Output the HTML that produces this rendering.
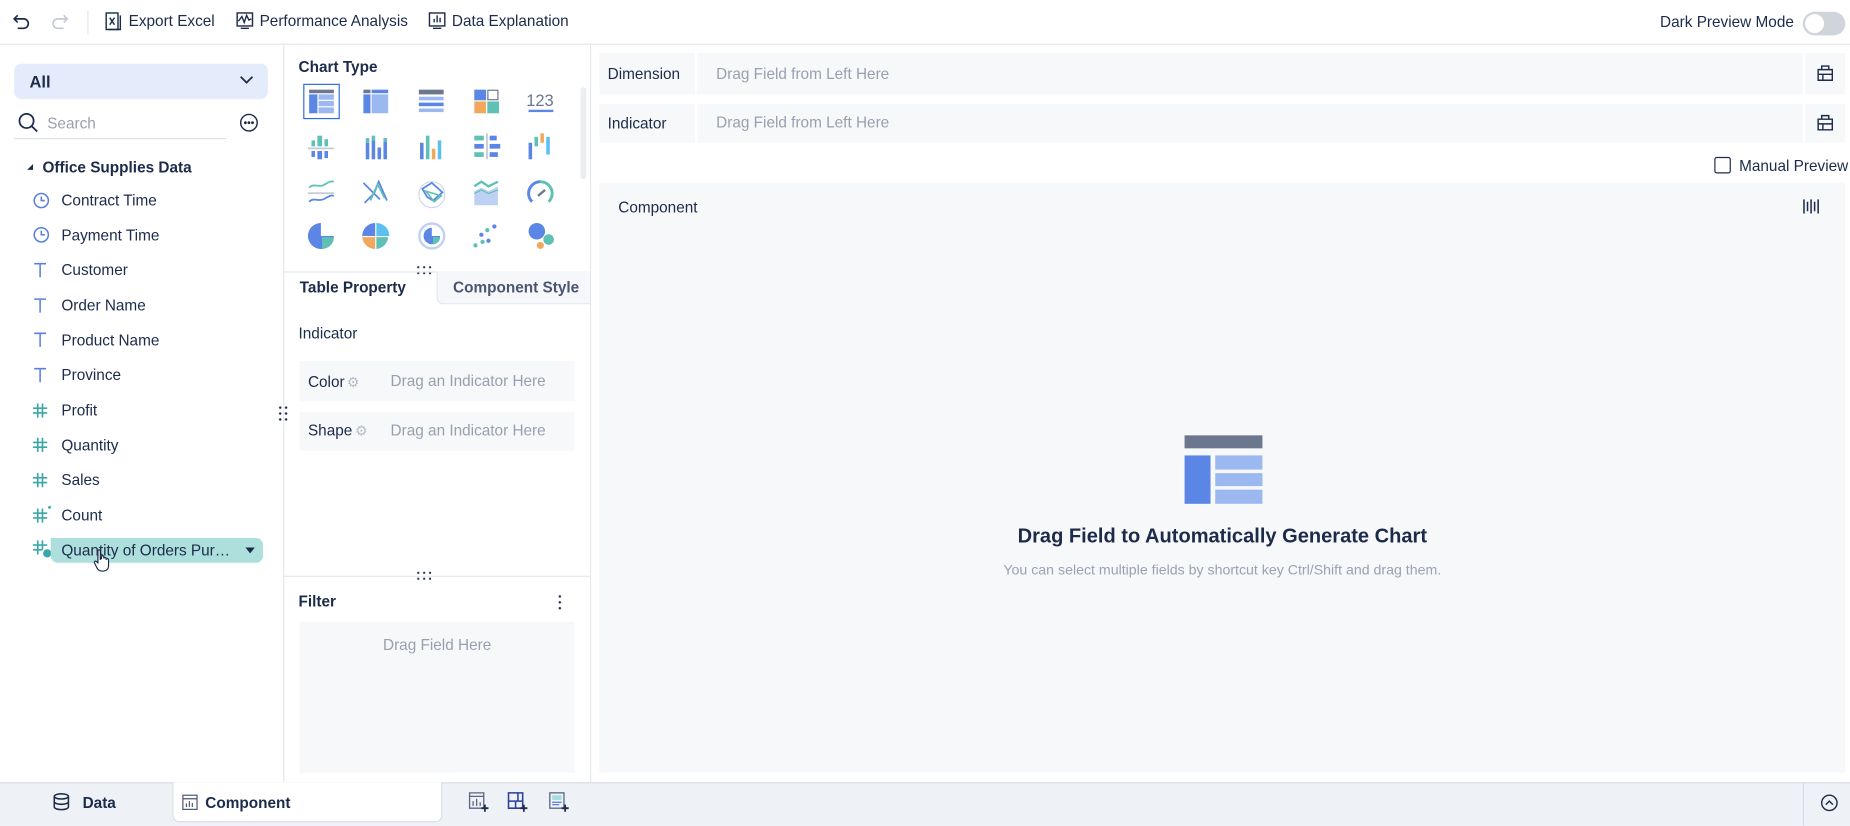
<!DOCTYPE html>
<html><head><meta charset="utf-8"><style>
*{box-sizing:border-box;margin:0;padding:0}
html,body{width:1850px;height:826px;overflow:hidden;background:#fff}
#s{position:absolute;left:0;top:0;width:1568px;height:700px;transform:scale(1.17985);transform-origin:0 0;font-family:"Liberation Sans",sans-serif;color:#1c2b4a;font-size:13px}
.a{position:absolute}
.t{position:absolute;white-space:nowrap;line-height:16px}
.b{font-weight:bold}
.g{color:#98a0b0}
.ic{position:absolute}
</style></head><body><div id="s">
<!-- top bar -->
<div class="a" style="left:0;top:37px;width:1568px;height:1px;background:#e4e7ec"></div>
<svg class="ic" style="left:10px;top:10px" width="16" height="16" viewBox="0 0 16 16" fill="none" stroke="#1c2b4a" stroke-width="1.4"><path d="M5 3L2 6l3 3"/><path d="M2 6h8a4 4 0 010 8H5"/></svg>
<svg class="ic" style="left:43px;top:10px" width="16" height="16" viewBox="0 0 16 16" fill="none" stroke="#c5cad3" stroke-width="1.4"><path d="M11 3l3 3-3 3"/><path d="M14 6H6a4 4 0 000 8h5"/></svg>
<div class="a" style="left:74px;top:9px;width:1px;height:20px;background:#e4e7ec"></div>
<svg class="ic" style="left:89px;top:10px" width="14" height="16" viewBox="0 0 14 16" fill="none" stroke="#1c2b4a" stroke-width="1.2"><rect x="1" y="1" width="10" height="14"/><path d="M13 3v12H3"/><path d="M4 5l4 6M8 5l-4 6"/></svg>
<div class="t" style="left:109px;top:10px">Export Excel</div>
<svg class="ic" style="left:200px;top:10px" width="15" height="15" viewBox="0 0 15 15" fill="none" stroke="#1c2b4a" stroke-width="1.2"><rect x="1" y="1" width="13" height="11"/><path d="M2 8l3-4 2 5 2-6 2 4 2-1"/><path d="M4 14h7"/></svg>
<div class="t" style="left:220px;top:10px">Performance Analysis</div>
<svg class="ic" style="left:363px;top:10px" width="15" height="15" viewBox="0 0 15 15" fill="none" stroke="#1c2b4a" stroke-width="1.2"><rect x="1" y="1" width="13" height="11"/><path d="M5 9V6M7.5 9V3M10 9V5"/><path d="M4 14h7"/></svg>
<div class="t" style="left:383px;top:10px">Data Explanation</div>
<div class="t" style="left:1407px;top:11px">Dark Preview Mode</div>
<div class="a" style="left:1528px;top:10px;width:36px;height:20px;border-radius:10px;background:#d0d4db"></div>
<div class="a" style="left:1530px;top:12px;width:16px;height:16px;border-radius:8px;background:#fff"></div>

<!-- left panel -->
<div class="a" style="left:240px;top:38px;width:1px;height:625px;background:#e4e7ec"></div>
<div class="a" style="left:12px;top:54px;width:215px;height:30px;border-radius:6px;background:#e4ecfb"></div>
<div class="t b" style="left:25px;top:61px;font-size:14px">All</div>
<svg class="ic" style="left:202px;top:63px" width="14" height="10" viewBox="0 0 14 10" fill="none" stroke="#1c2b4a" stroke-width="1.5"><path d="M2 2l5 5 5-5"/></svg>
<svg class="ic" style="left:15px;top:95px" width="18" height="18" viewBox="0 0 18 18" fill="none" stroke="#1c2b4a" stroke-width="1.5"><circle cx="7.5" cy="7.5" r="6"/><path d="M12 12l4.5 4.5"/></svg>
<div class="t g" style="left:40px;top:97px">Search</div>
<div class="a" style="left:12px;top:117px;width:180px;height:1px;background:#dde1e7"></div>
<svg class="ic" style="left:203px;top:96px" width="16" height="16" viewBox="0 0 16 16" fill="none" stroke="#1c2b4a" stroke-width="1.2"><circle cx="8" cy="8" r="7"/><circle cx="5" cy="8" r=".6" fill="#1c2b4a"/><circle cx="8" cy="8" r=".6" fill="#1c2b4a"/><circle cx="11" cy="8" r=".6" fill="#1c2b4a"/></svg>
<svg class="ic" style="left:22px;top:138px" width="7" height="7" viewBox="0 0 7 7"><path d="M6 1V6H1z" fill="#1c2b4a"/></svg>
<div class="t b" style="left:36px;top:134px">Office Supplies Data</div>

<svg class="ic" style="left:28px;top:163px" width="14" height="14" viewBox="0 0 14 14" fill="none" stroke="#5b7ee0" stroke-width="1.3"><circle cx="7" cy="7" r="6"/><path d="M7 3.5V7h3"/></svg>
<div class="t" style="left:52px;top:162px">Contract Time</div>
<svg class="ic" style="left:28px;top:192px" width="14" height="14" viewBox="0 0 14 14" fill="none" stroke="#5b7ee0" stroke-width="1.3"><circle cx="7" cy="7" r="6"/><path d="M7 3.5V7h3"/></svg>
<div class="t" style="left:52px;top:192px">Payment Time</div>
<svg class="ic" style="left:28px;top:222px" width="12" height="14" viewBox="0 0 12 14" fill="none" stroke="#5b7ee0" stroke-width="1.3"><path d="M1 1.5h10M6 1.5V13"/></svg>
<div class="t" style="left:52px;top:221px">Customer</div>
<svg class="ic" style="left:28px;top:252px" width="12" height="14" viewBox="0 0 12 14" fill="none" stroke="#5b7ee0" stroke-width="1.3"><path d="M1 1.5h10M6 1.5V13"/></svg>
<div class="t" style="left:52px;top:251px">Order Name</div>
<svg class="ic" style="left:28px;top:281px" width="12" height="14" viewBox="0 0 12 14" fill="none" stroke="#5b7ee0" stroke-width="1.3"><path d="M1 1.5h10M6 1.5V13"/></svg>
<div class="t" style="left:52px;top:281px">Product Name</div>
<svg class="ic" style="left:28px;top:311px" width="12" height="14" viewBox="0 0 12 14" fill="none" stroke="#5b7ee0" stroke-width="1.3"><path d="M1 1.5h10M6 1.5V13"/></svg>
<div class="t" style="left:52px;top:310px">Province</div>
<svg class="ic" style="left:27px;top:341px" width="14" height="14" viewBox="0 0 14 14" fill="none" stroke="#3aa8a8" stroke-width="1.4"><path d="M5 1v12M9 1v12M1 5h12M1 9h12"/></svg>
<div class="t" style="left:52px;top:340px">Profit</div>
<svg class="ic" style="left:27px;top:370px" width="14" height="14" viewBox="0 0 14 14" fill="none" stroke="#3aa8a8" stroke-width="1.4"><path d="M5 1v12M9 1v12M1 5h12M1 9h12"/></svg>
<div class="t" style="left:52px;top:370px">Quantity</div>
<svg class="ic" style="left:27px;top:400px" width="14" height="14" viewBox="0 0 14 14" fill="none" stroke="#3aa8a8" stroke-width="1.4"><path d="M5 1v12M9 1v12M1 5h12M1 9h12"/></svg>
<div class="t" style="left:52px;top:399px">Sales</div>
<svg class="ic" style="left:27px;top:428px" width="17" height="16" viewBox="0 0 17 16" fill="none" stroke="#3aa8a8" stroke-width="1.4"><path d="M5 3v12M9 3v12M1 7h12M1 11h12"/><circle cx="15" cy="2" r="1.2" fill="#3aa8a8" stroke="none"/></svg>
<div class="t" style="left:52px;top:429px">Count</div>
<svg class="ic" style="left:27px;top:457px" width="18" height="16" viewBox="0 0 18 16" fill="none" stroke="#3aa8a8" stroke-width="1.4"><path d="M5 1v12M9 1v8M1 5h12M1 9h8"/><circle cx="13" cy="12" r="3.5" fill="#3aa8a8" stroke="none"/></svg>
<div class="a" style="left:43px;top:456px;width:180px;height:21px;border-radius:0 6px 6px 6px;background:#ade0dc"></div>
<div class="t" style="left:52px;top:459px">Quantity of Orders Pur…</div>
<svg class="ic" style="left:208px;top:464px" width="8" height="6" viewBox="0 0 8 6"><path d="M0 0h8L4 5z" fill="#1c2b4a"/></svg>
<svg class="ic" style="left:78px;top:465px" width="16" height="20" viewBox="0 0 16 20" fill="#fff" stroke="#1c2b4a" stroke-width="1"><path d="M5 2a1 1 0 012 0v7l1-.5V7a1 1 0 012 0v1.5a1 1 0 012 0v1a1 1 0 012 0V15c0 2-2 4-4 4H8c-2 0-3-1-4-3L2 12a1 1 0 011.5-1.2L5 12z"/></svg>
<div class="a" style="left:235px;top:343px;width:10px;height:14px;background:radial-gradient(circle,#1c2b4a 0.9px,transparent 1.2px) 0 0/5px 5px"></div>

<!-- middle -->
<div class="a" style="left:500px;top:38px;width:1px;height:625px;background:#e4e7ec"></div>
<div class="t b" style="left:253px;top:49px">Chart Type</div>
<div class="a" style="left:492px;top:74px;width:5px;height:78px;border-radius:3px;background:#eceef2"></div>
<div class="a" style="left:257px;top:71px;width:31px;height:30px;border:1.5px solid #2c6bd9"></div>
<svg class="ic" style="left:256px;top:70px" width="240" height="150" viewBox="0 0 240 150">
<!-- row1 -->
<rect x="6" y="6" width="21" height="3" fill="#6b778c"/><rect x="6" y="10" width="7" height="16" fill="#5b86e5"/><rect x="14" y="10" width="13" height="4.5" fill="#9cb8f0"/><rect x="14" y="15.5" width="13" height="4.5" fill="#9cb8f0"/><rect x="14" y="21" width="13" height="5" fill="#9cb8f0"/>
<rect x="52" y="6" width="6" height="3" fill="#6b778c"/><rect x="59" y="6" width="14" height="3" fill="#5b86e5"/><rect x="52" y="10" width="6" height="16" fill="#5b86e5"/><rect x="59" y="10" width="14" height="16" fill="#9cb8f0"/>
<rect x="99" y="6" width="21" height="4" fill="#6b778c"/><rect x="99" y="12" width="21" height="3" fill="#9cb8f0"/><rect x="99" y="17" width="21" height="3" fill="#5b86e5"/><rect x="99" y="22" width="21" height="3" fill="#9cb8f0"/>
<rect x="146" y="6" width="10" height="9" fill="#5b86e5"/><rect x="157.5" y="6.5" width="8.5" height="8" fill="#fff" stroke="#6b778c"/><rect x="146" y="16" width="10" height="10" fill="#f0a95c"/><rect x="157" y="16" width="10" height="10" fill="#5fc1b5"/>
<text x="190" y="20" font-family="Liberation Sans" font-size="14" fill="#6b778c">123</text><rect x="192" y="23" width="21" height="2" fill="#5b86e5"/>
<!-- row2 -->
<g transform="translate(0,5)">
<rect x="8" y="44" width="3" height="5" fill="#5fc1b5"/><rect x="13" y="40" width="4" height="9" fill="#5fc1b5"/><rect x="19" y="43" width="3" height="6" fill="#5fc1b5"/><rect x="5" y="50" width="22" height="1.5" fill="#c5cad3"/><rect x="8" y="53" width="3" height="5" fill="#5b86e5"/><rect x="13" y="53" width="4" height="7" fill="#5b86e5"/><rect x="19" y="53" width="3" height="6" fill="#5b86e5"/>
<rect x="54" y="46" width="3" height="14" fill="#5b86e5"/><rect x="54" y="42" width="3" height="4" fill="#5fc1b5"/><rect x="59" y="44" width="3" height="16" fill="#5b86e5"/><rect x="59" y="40" width="3" height="4" fill="#5fc1b5"/><rect x="64" y="50" width="3" height="10" fill="#5b86e5"/><rect x="69" y="45" width="3" height="15" fill="#5b86e5"/><rect x="69" y="42" width="3" height="3" fill="#5fc1b5"/>
<rect x="100" y="46" width="3" height="14" fill="#5b86e5"/><rect x="105" y="40" width="3" height="20" fill="#5fc1b5"/><rect x="110" y="51" width="3" height="9" fill="#f0a95c"/><rect x="115" y="44" width="3" height="16" fill="#5bc0f0"/>
<rect x="146" y="40" width="8" height="4" fill="#5fc1b5"/><rect x="156" y="38" width="1.5" height="22" fill="#c5cad3"/><rect x="159" y="40" width="6" height="4" fill="#5b86e5"/><rect x="146" y="47" width="8" height="4" fill="#5b86e5"/><rect x="159" y="47" width="9" height="4" fill="#5b86e5"/><rect x="146" y="54" width="8" height="4" fill="#5fc1b5"/><rect x="159" y="54" width="7" height="4" fill="#5b86e5"/>
<rect x="192" y="46" width="3" height="14" fill="#5b86e5"/><rect x="197" y="41" width="3" height="8" fill="#5fc1b5"/><rect x="202" y="38" width="3" height="8" fill="#f0a95c"/><rect x="207" y="41" width="3" height="15" fill="#5bc0f0"/>
</g>
<!-- row3 -->
<g transform="translate(0,4)">
<path d="M6 85c4-4 8 0 12-2s6-4 9-3" stroke="#5fc1b5" stroke-width="1.5" fill="none"/><rect x="5" y="89" width="22" height="1.5" fill="#c5cad3"/><path d="M6 97c4-4 8 0 12-2s6-4 9-3" stroke="#5b86e5" stroke-width="1.5" fill="none"/>
<path d="M52 81l14 14M53 98l8-8 4-10 7 16" stroke="#5b86e5" stroke-width="1.5" fill="none"/><path d="M58 96l6-14 6 12" stroke="#5fc1b5" stroke-width="1.5" fill="none"/>
<circle cx="110" cy="91" r="11" fill="none" stroke="#d0d8e8"/><path d="M102 86l8-5 9 8-8 7-5-3z" fill="none" stroke="#5b86e5" stroke-width="1.5"/><path d="M105 88l13 4-6 5z" fill="none" stroke="#5fc1b5" stroke-width="1.3"/>
<path d="M146 88l6-3 6 3 8-4v16h-20z" fill="#bfd0f5"/><path d="M146 84l6-4 6 4 8-4" stroke="#5fc1b5" stroke-width="2" fill="none"/><path d="M146 90l6-3 6 3 8-3" stroke="#5fc1b5" stroke-width="1" fill="none"/>
<path d="M195 97a10 10 0 01-3-7 10 10 0 0110-10" stroke="#5b86e5" stroke-width="2.5" fill="none"/><path d="M202 80a10 10 0 0110 10 10 10 0 01-3 7" stroke="#5fc1b5" stroke-width="2.5" fill="none"/><path d="M200 92l6-5" stroke="#6b778c" stroke-width="2"/>
</g>
<!-- row4 -->
<g transform="translate(0,-1)">
<path d="M16 120a11 11 0 1011 11H16z" fill="#5b86e5"/><path d="M17 132h10a10 10 0 01-10 10z" fill="#5fc1b5"/>
<path d="M62 120a11 11 0 00-11 11h11z" fill="#5b86e5"/><path d="M63 120a11 11 0 0111 11H63z" fill="#5bc0f0"/><path d="M51 132a11 11 0 0011 10v-10z" fill="#f0a95c"/><path d="M63 132v10a11 11 0 0010-10z" fill="#5fc1b5"/>
<circle cx="110" cy="131" r="10.5" fill="none" stroke="#bfd0f5" stroke-width="2"/><path d="M110 124a7 7 0 107 7h-7z" fill="#5b86e5"/><path d="M111 132h6a6 6 0 01-6 6z" fill="#5fc1b5"/>
<g fill="#5b86e5"><circle cx="152" cy="130" r="1.8"/><circle cx="163" cy="123" r="1.8"/><circle cx="158" cy="135" r="1.8"/></g><g fill="#5fc1b5"><circle cx="147" cy="139" r="1.8"/><circle cx="157" cy="126" r="1.8"/><circle cx="153" cy="136" r="1.8"/></g>
<circle cx="199" cy="127" r="7" fill="#5b86e5"/><circle cx="209" cy="134" r="4.5" fill="#5fc1b5"/><circle cx="202" cy="139" r="3" fill="#f0a95c"/>
</g>
</svg>
<div class="a" style="left:352px;top:224px;width:15px;height:10px;background:radial-gradient(circle,#1c2b4a 0.8px,transparent 1.1px) 0 0/5px 5px"></div>
<div class="a" style="left:241px;top:230px;width:259px;height:1px;background:#e4e7ec"></div>
<div class="a" style="left:370px;top:230px;width:130px;height:28px;background:#f5f7fa;border-left:1px solid #e4e7ec;border-bottom:1px solid #e4e7ec;border-radius:0 0 0 6px"></div>
<div class="t b" style="left:254px;top:236px">Table Property</div>
<div class="t b" style="left:384px;top:236px;color:#4a5670">Component Style</div>
<div class="t" style="left:253px;top:275px">Indicator</div>
<div class="a" style="left:254px;top:306px;width:233px;height:34px;background:#f7f8fa"></div>
<div class="t" style="left:261px;top:316px">Color</div>
<div class="t" style="left:294px;top:316px;color:#b5bcc8;font-size:12px">⚙</div>
<div class="t g" style="left:331px;top:315px">Drag an Indicator Here</div>
<div class="a" style="left:254px;top:349px;width:233px;height:33px;background:#f7f8fa"></div>
<div class="t" style="left:261px;top:357px">Shape</div>
<div class="t" style="left:301px;top:357px;color:#b5bcc8;font-size:12px">⚙</div>
<div class="t g" style="left:331px;top:357px">Drag an Indicator Here</div>
<div class="a" style="left:241px;top:488px;width:259px;height:1px;background:#e4e7ec"></div>
<div class="a" style="left:352px;top:483px;width:15px;height:10px;background:radial-gradient(circle,#1c2b4a 0.8px,transparent 1.1px) 0 0/5px 5px"></div>
<div class="t b" style="left:253px;top:502px">Filter</div>
<div class="a" style="left:472px;top:503px;width:5px;height:15px;background:radial-gradient(circle,#1c2b4a 0.9px,transparent 1.2px) 0 0/5px 5px"></div>
<div class="a" style="left:254px;top:527px;width:233px;height:128px;background:#f7f8fa"></div>
<div class="t g" style="left:254px;top:539px;width:233px;text-align:center">Drag Field Here</div>

<!-- right -->
<div class="a" style="left:508px;top:45px;width:81px;height:35px;background:#f7f8fa"></div>
<div class="a" style="left:591px;top:45px;width:937px;height:35px;background:#f7f8fa"></div>
<div class="a" style="left:1530px;top:45px;width:34px;height:35px;background:#f7f8fa"></div>
<div class="t" style="left:515px;top:55px">Dimension</div>
<div class="t g" style="left:607px;top:55px">Drag Field from Left Here</div>
<div class="a" style="left:508px;top:88px;width:81px;height:33px;background:#f7f8fa"></div>
<div class="a" style="left:591px;top:88px;width:937px;height:33px;background:#f7f8fa"></div>
<div class="a" style="left:1530px;top:88px;width:34px;height:33px;background:#f7f8fa"></div>
<div class="t" style="left:515px;top:97px">Indicator</div>
<div class="t g" style="left:607px;top:96px">Drag Field from Left Here</div>
<svg class="ic" style="left:1540px;top:55px" width="14" height="14" viewBox="0 0 14 14" fill="none" stroke="#1c2b4a" stroke-width="1.2"><path d="M4 4V1h6v3M1 4h12v9H1zM1 8h12M5 8v5"/></svg>
<svg class="ic" style="left:1540px;top:97px" width="14" height="14" viewBox="0 0 14 14" fill="none" stroke="#1c2b4a" stroke-width="1.2"><path d="M4 4V1h6v3M1 4h12v9H1zM1 8h12M5 8v5"/></svg>
<div class="a" style="left:1453px;top:133px;width:14px;height:14px;border:1px solid #1c2b4a;border-radius:2px"></div>
<div class="t" style="left:1474px;top:133px">Manual Preview</div>
<div class="a" style="left:508px;top:155px;width:1056px;height:500px;background:#f7f8fa"></div>
<div class="t" style="left:524px;top:168px">Component</div>
<svg class="ic" style="left:1528px;top:168px" width="16" height="14" viewBox="0 0 16 14" stroke="#1c2b4a" stroke-width="1.3"><path d="M1 1v12M4 3v8M7 1v12M10 3v8M13 1v12"/></svg>
<div class="a" style="left:1004px;top:369px;width:66px;height:11px;background:#6b778c"></div>
<div class="a" style="left:1004px;top:386px;width:22px;height:41px;background:#5b86e5"></div>
<div class="a" style="left:1030px;top:386px;width:40px;height:12px;background:#9cb8f0"></div>
<div class="a" style="left:1030px;top:401px;width:40px;height:11px;background:#9cb8f0"></div>
<div class="a" style="left:1030px;top:415px;width:40px;height:12px;background:#9cb8f0"></div>
<div class="t b" style="left:736px;top:445px;width:600px;text-align:center;font-size:17px;line-height:20px">Drag Field to Automatically Generate Chart</div>
<div class="t" style="left:736px;top:475px;width:600px;text-align:center;font-size:12px;color:#98a2b3">You can select multiple fields by shortcut key Ctrl/Shift and drag them.</div>

<!-- bottom -->
<div class="a" style="left:0;top:663px;width:1568px;height:37px;background:#eef1f6;border-top:1px solid #d8dde5"></div>
<svg class="ic" style="left:45px;top:672px" width="14" height="15" viewBox="0 0 14 15" fill="none" stroke="#1c2b4a" stroke-width="1.3"><ellipse cx="7" cy="3" rx="6" ry="2.2"/><path d="M1 3v9c0 1.2 2.7 2.2 6 2.2s6-1 6-2.2V3M1 7.5c0 1.2 2.7 2.2 6 2.2s6-1 6-2.2"/></svg>
<div class="t b" style="left:70px;top:673px">Data</div>
<div class="a" style="left:146px;top:663px;width:229px;height:34px;background:#fff;border-radius:0 0 6px 6px;border:1px solid #d8dde5;border-top:none"></div>
<svg class="ic" style="left:154px;top:673px" width="14" height="14" viewBox="0 0 14 14" fill="none" stroke="#4a5670" stroke-width="1"><rect x="1" y="1" width="12" height="12"/><path d="M1 4h12M4 11V8M6.5 11V6M9 11V7.5"/></svg>
<div class="t b" style="left:174px;top:673px">Component</div>
<svg class="ic" style="left:397px;top:671px" width="18" height="18" viewBox="0 0 18 18" fill="none" stroke="#5a6680" stroke-width="1.1"><path d="M1 1h12v13H1zM1 4h12M4 12V8M7 12V6M10 12V9"/><path d="M14 11v6M11 14h6" stroke="#1c2b4a" stroke-width="1.5"/></svg>
<svg class="ic" style="left:430px;top:671px" width="18" height="18" viewBox="0 0 18 18" fill="none" stroke="#2a3fa0" stroke-width="1.3"><path d="M1 1h12v13H1zM1 8h12M7 8v6M9 1v7"/><path d="M14 11v6M11 14h6" stroke="#1c2b4a" stroke-width="1.5"/></svg>
<svg class="ic" style="left:465px;top:671px" width="18" height="18" viewBox="0 0 18 18" fill="none" stroke="#5a6680" stroke-width="1.1"><rect x="1" y="1" width="12" height="13"/><rect x="3" y="3" width="8" height="4" fill="#a6dcdf" stroke="none"/><path d="M3 9h8M3 11h6" stroke="#5b86e5"/><path d="M14 11v6M11 14h6" stroke="#1c2b4a" stroke-width="1.5"/></svg>
<div class="a" style="left:1528px;top:663px;width:1px;height:37px;background:#d8dde5"></div>
<svg class="ic" style="left:1543px;top:673px" width="15" height="15" viewBox="0 0 15 15" fill="none" stroke="#1c2b4a" stroke-width="1.2"><circle cx="7.5" cy="7.5" r="6.5"/><path d="M4.5 9l3-3 3 3"/></svg>
</div></body></html>
